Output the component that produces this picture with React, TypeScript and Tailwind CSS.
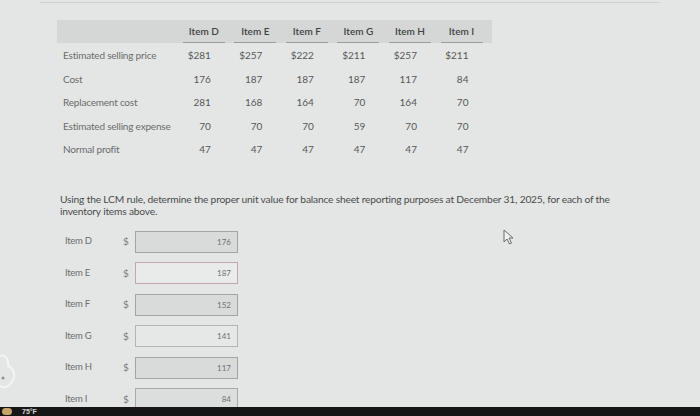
import React from "react";

const cols = ["Item D", "Item E", "Item F", "Item G", "Item H", "Item I"];
const rows: { label: string; vals: string[] }[] = [
  { label: "Estimated selling price", vals: ["$281", "$257", "$222", "$211", "$257", "$211"] },
  { label: "Cost", vals: ["176", "187", "187", "187", "117", "84"] },
  { label: "Replacement cost", vals: ["281", "168", "164", "70", "164", "70"] },
  { label: "Estimated selling expense", vals: ["70", "70", "70", "59", "70", "70"] },
  { label: "Normal profit", vals: ["47", "47", "47", "47", "47", "47"] },
];

const answers = [
  { label: "Item D", val: "176", bg: "bg-[#d9dbdb]", border: "border-[#a3a5a5]" },
  { label: "Item E", val: "187", bg: "bg-[#e9ebea]", border: "border-[#c4a6ab]" },
  { label: "Item F", val: "152", bg: "bg-[#d9dbdb]", border: "border-[#a3a5a5]" },
  { label: "Item G", val: "141", bg: "bg-[#e6e8e7]", border: "border-[#b4b6b6]" },
  { label: "Item H", val: "117", bg: "bg-[#d9dbdb]", border: "border-[#a3a5a5]" },
  { label: "Item I", val: "84", bg: "bg-[#dcdede]", border: "border-[#a8aaaa]" },
];

export default function App() {
  return (
    <div className="relative w-[700px] h-[416px] overflow-hidden bg-[#e4e6e5] font-['Lato','Open_Sans',sans-serif] flex flex-col">
      <div className="h-[3px] border-b border-[#cfd1d0] mx-[40px]" />
      {/* table */}
      <div className="pl-[57px] pt-[17px]">
        <div className="w-[435px]">
          <div className="flex h-[23px] bg-[#d5d7d6]">
            <div className="w-[127px]" />
            {cols.map((c) => (
              <div key={c} className="w-[52px] flex">
                <div className="w-[42px] h-full flex items-center justify-center border-b border-[#9a9c9c] text-[10px] font-semibold text-[#3f4242]">
                  {c}
                </div>
              </div>
            ))}
          </div>
          <div className="mt-[1px]">
            {rows.map((r) => (
              <div key={r.label} className="flex h-[23.5px] items-center">
                <div className="w-[127px] pl-[6px] text-[10px] text-[#6a6c6c] tracking-[-0.2px]">{r.label}</div>
                {r.vals.map((v, i) => (
                  <div key={i} className="w-[52px] flex">
                    <div className="w-[42px] pr-[14px] text-right text-[10px] text-[#565858]">{v}</div>
                  </div>
                ))}
              </div>
            ))}
          </div>
        </div>
      </div>
      {/* question */}
      <p className="mt-[31px] ml-[60px] w-[560px] text-[10.25px] leading-[12px] text-[#4a4c4c] tracking-[-0.2px]">
        Using the LCM rule, determine the proper unit value for balance sheet reporting purposes at December 31, 2025, for each of the inventory items above.
      </p>
      <div className="mt-[14px] ml-[65px] flex flex-col gap-[9.5px]">
        {answers.map((a) => (
          <div key={a.label} className="flex items-center h-[22px]">
            <div className="w-[58px] text-[9.5px] text-[#6c6e6e] tracking-[-0.3px]">{a.label}</div>
            <div className="w-[12px] text-[10px] text-[#7a7c7c]">$</div>
            <div className={`w-[103px] h-[22px] border ${a.border} ${a.bg} flex items-center justify-end pr-[6px] text-[8px] text-[#6f7171]`}>
              {a.val}
            </div>
          </div>
        ))}
      </div>
      {/* cursor */}
      <svg className="absolute left-[502px] top-[229px]" width="14" height="16" viewBox="0 0 14 16">
        <path d="M2 1 L2 13 L5 10 L7.5 15 L9.5 14 L7 9 L11 9 Z" fill="#f2f2f2" stroke="#6a6a6a" strokeWidth="1" strokeLinejoin="round" />
      </svg>
      {/* left edge icon */}
      <svg className="absolute left-0 top-[352px]" width="18" height="42" viewBox="0 0 18 42">
        <path d="M0 4 C6 2 9 8 8 14 C14 16 16 24 12 30 C8 36 2 36 0 34" fill="none" stroke="#f4f4f4" strokeWidth="2" />
        <circle cx="3" cy="26" r="1.5" fill="#8a9090" />
      </svg>
      {/* bottom taskbar */}
      <div className="absolute left-0 bottom-0 w-full h-[9px] bg-[#161616] overflow-hidden flex items-center">
        <div className="ml-[2px] w-[10px] h-[7px] rounded-full bg-[#c9a46a]" />
        <span className="ml-[10px] text-[7px] leading-[8px] font-bold text-[#d8d8d8] font-['Liberation_Sans',sans-serif]">75°F</span>
      </div>
    </div>
  );
}
